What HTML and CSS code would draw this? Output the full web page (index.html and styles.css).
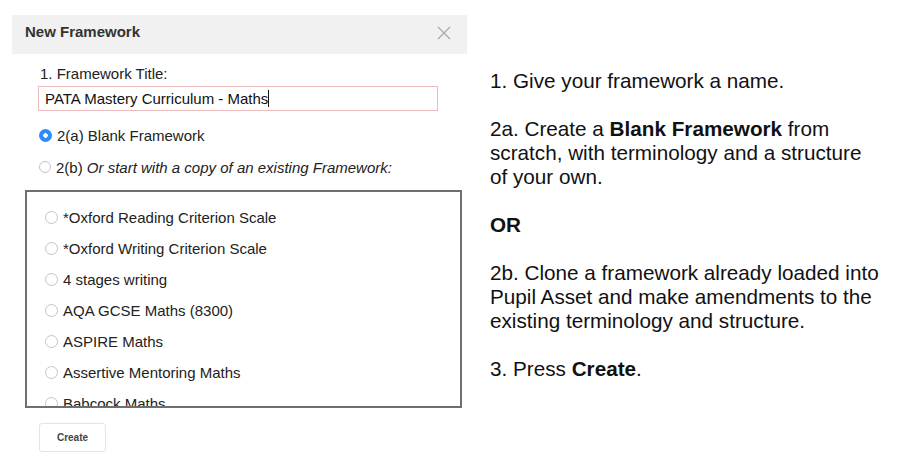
FILE: index.html
```html
<!DOCTYPE html>
<html lang="en">
<head>
<meta charset="utf-8">
<title>New Framework</title>
<link rel="stylesheet" href="styles.css">
</head>
<body>
<div class="page">
  <div class="left">
    <div class="dialog">
      <div class="header">
        <span class="title">New Framework</span>
        <svg class="close" width="14" height="14" viewBox="0 0 14 14"><path d="M1 1L13 13M13 1L1 13" stroke="#a8a8a8" stroke-width="1.2" fill="none"/></svg>
      </div>
      <div class="form">
        <div class="label">1. Framework Title:</div>
        <div class="input">PATA Mastery Curriculum - Maths<span class="caret"></span></div>
        <div class="radio-row first"><span class="radio checked"></span><span>2(a) Blank Framework</span></div>
        <div class="radio-row"><span class="radio"></span><span>2(b) <em>Or start with a copy of an existing Framework:</em></span></div>
      </div>
      <div class="list">
        <div class="item"><span class="radio"></span><span>*Oxford Reading Criterion Scale</span></div>
        <div class="item"><span class="radio"></span><span>*Oxford Writing Criterion Scale</span></div>
        <div class="item"><span class="radio"></span><span>4 stages writing</span></div>
        <div class="item"><span class="radio"></span><span>AQA GCSE Maths (8300)</span></div>
        <div class="item"><span class="radio"></span><span>ASPIRE Maths</span></div>
        <div class="item"><span class="radio"></span><span>Assertive Mentoring Maths</span></div>
        <div class="item"><span class="radio"></span><span>Babcock Maths</span></div>
      </div>
      <button class="create">Create</button>
    </div>
  </div>
  <div class="right">
    <p>1. Give your framework a name.</p>
    <p>2a. Create a <b>Blank Framework</b> from scratch, with terminology and a structure of your own.</p>
    <p><b>OR</b></p>
    <p>2b. Clone a framework already loaded into Pupil Asset and make amendments to the existing terminology and structure.</p>
    <p>3. Press <b>Create</b>.</p>
  </div>
</div>
</body>
</html>
```
FILE: styles.css
```css
html, body {
  margin: 0;
  padding: 0;
  background: #ffffff;
}
body {
  font-family: "Liberation Sans", Arial, sans-serif;
  color: #222;
}
.page {
  display: flex;
  width: 909px;
  height: 473px;
  overflow: hidden;
}
.left {
  width: 467px;
  flex: none;
  padding-top: 15px;
}
.dialog {
  margin-left: 12px;
  width: 455px;
}
.header {
  height: 39px;
  box-sizing: border-box;
  background: #f1f1f1;
  display: flex;
  align-items: center;
  justify-content: space-between;
  padding: 0 16px 6px 13px;
}
.title {
  font-weight: bold;
  font-size: 15px;
  color: #333;
}
.close {
  display: block;
  margin-top: 2px;
}
.form {
  padding-left: 26px;
}
.label {
  margin-top: 11px;
  font-size: 15px;
  line-height: 18px;
  padding-left: 2px;
  color: #222;
}
.input {
  margin-top: 3px;
  width: 400px;
  height: 25px;
  box-sizing: border-box;
  border: 1px solid #ebbcbc;
  font-size: 15px;
  line-height: 23px;
  padding-left: 6px;
  color: #111;
  display: flex;
  align-items: center;
}
.caret {
  display: inline-block;
  width: 1px;
  height: 17px;
  background: #111;
}
.radio-row {
  display: flex;
  align-items: center;
  height: 20px;
  margin-top: 12px;
  font-size: 15px;
  color: #222;
}
.radio-row.first {
  margin-top: 14px;
}
.radio {
  width: 12px;
  height: 12px;
  border: 1px solid #c4c4c4;
  border-radius: 50%;
  box-sizing: border-box;
  flex: none;
  margin-left: 1px;
  margin-right: 5px;
  background: #fff;
}
.radio.checked {
  border: none;
  background: radial-gradient(circle, #ffffff 0 2px, #2e8cf7 2.5px);
  width: 13px;
  height: 13px;
}
.list {
  margin-top: 13px;
  margin-left: 13px;
  width: 437px;
  height: 218px;
  box-sizing: border-box;
  border: 2px solid #6f6f6f;
  padding-top: 10px;
  padding-left: 17px;
  overflow: hidden;
}
.item {
  display: flex;
  align-items: center;
  height: 31px;
  font-size: 15px;
  color: #222;
}
.item .radio {
  width: 13px;
  height: 13px;
}
.create {
  display: block;
  margin-top: 15px;
  margin-left: 27px;
  width: 67px;
  height: 29px;
  border: 1px solid #e4e4e4;
  border-radius: 3px;
  background: #fff;
  font-family: "Liberation Sans", Arial, sans-serif;
  font-weight: bold;
  font-size: 10px;
  color: #444;
  padding: 0;
}
.right {
  padding-left: 23px;
  padding-top: 69px;
  width: 391px;
  flex: none;
  font-size: 20.7px;
  line-height: 24px;
  color: #111;
}
.right p {
  margin: 0 0 24px 0;
}
```
